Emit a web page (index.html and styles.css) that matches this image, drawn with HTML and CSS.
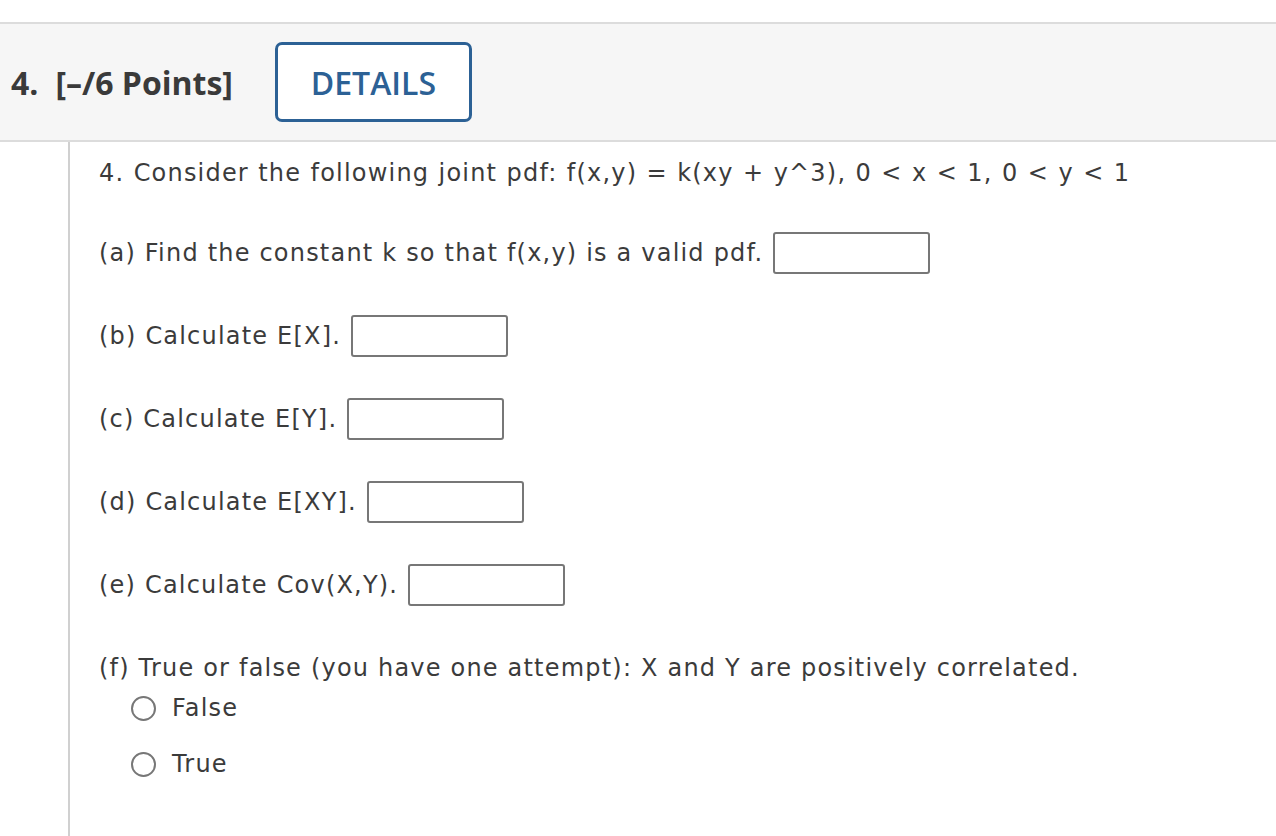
FILE: index.html
```html
<!DOCTYPE html>
<html>
<head>
<meta charset="utf-8">
<link rel="stylesheet" href="styles.css">
</head>
<body>
<div class="page">
  <div class="qhead">
    <span class="qnum">4.</span>
    <span class="qpts">[–/6 Points]</span>
    <button class="details">DETAILS</button>
  </div>
  <div class="qbody">
    <div class="content">
      <p class="intro">4. Consider the following joint pdf: f(x,y) = k(xy + y^3), 0 &lt; x &lt; 1, 0 &lt; y &lt; 1</p>
      <div class="part"><span>(a) Find the constant k so that f(x,y) is a valid pdf.</span><input class="ans" type="text"></div>
      <div class="part"><span>(b) Calculate E[X].</span><input class="ans" type="text"></div>
      <div class="part"><span>(c) Calculate E[Y].</span><input class="ans" type="text"></div>
      <div class="part"><span>(d) Calculate E[XY].</span><input class="ans" type="text"></div>
      <div class="part"><span>(e) Calculate Cov(X,Y).</span><input class="ans" type="text"></div>
      <p class="tf">(f) True or false (you have one attempt): X and Y are positively correlated.</p>
      <div class="opts">
        <label class="opt"><span class="radio"></span>False</label>
        <label class="opt"><span class="radio"></span>True</label>
      </div>
    </div>
  </div>
</div>
</body>
</html>
```
FILE: styles.css
```css
html, body {
  margin: 0;
  padding: 0;
  background: #fff;
}
.page {
  padding-top: 22px;
  height: 814px;
  display: flex;
  flex-direction: column;
}
.qhead {
  border-top: 2px solid #dcdcdc;
  border-bottom: 2px solid #dcdcdc;
  background: #f6f6f6;
  height: 116px;
  display: flex;
  align-items: center;
  padding-left: 11px;
  font-family: "Open Sans", sans-serif;
  font-weight: 700;
  font-size: 32px;
  color: #3a3a3a;
}
.qnum { margin-right: 17px; }
.qpts { margin-right: 42px; }
.details {
  box-sizing: border-box;
  width: 197px;
  height: 80px;
  border: 3px solid #2c6195;
  border-radius: 7px;
  background: #fff;
  color: #2c6195;
  font-family: "Open Sans", sans-serif;
  font-weight: 600;
  font-size: 32px;
  padding: 0;
}
.qbody {
  flex: 1;
  margin-left: 68px;
  border-left: 2px solid #d0d0d0;
}
.content {
  padding-left: 29px;
  font-family: "DejaVu Sans", Verdana, sans-serif;
  font-size: 24px;
  letter-spacing: 1.2px;
  color: #3b3b3b;
}
.intro {
  margin: 16px 0 0;
  line-height: 30px;
  word-spacing: 0.5px;
}
.part {
  display: flex;
  align-items: center;
  gap: 10px;
  height: 42px;
  margin-top: 41px;
}
.part:first-of-type { margin-top: 44px; }
.ans {
  box-sizing: border-box;
  width: 157px;
  height: 42px;
  border: 2px solid #777;
  border-radius: 3px;
  background: #fff;
  margin: 0;
}
.tf {
  margin: 47px 0 0;
  line-height: 30px;
}
.opts {
  padding-left: 32px;
  display: flex;
  flex-direction: column;
  gap: 26px;
  margin-top: 10px;
}
.opt {
  display: flex;
  align-items: center;
  gap: 16px;
  line-height: 30px;
}
.radio {
  box-sizing: border-box;
  width: 25px;
  height: 25px;
  border: 2px solid #777;
  border-radius: 50%;
  background: #fff;
}
```
